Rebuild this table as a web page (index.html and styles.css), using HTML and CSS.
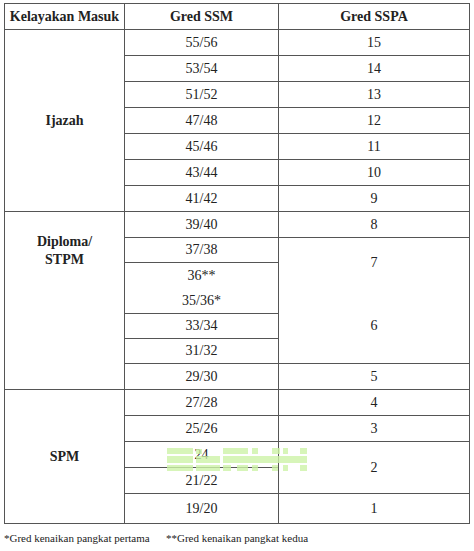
FILE: index.html
```html
<!DOCTYPE html>
<html>
<head>
<meta charset="utf-8">
<link rel="stylesheet" href="styles.css">
</head>
<body>
<div class="page">
  <div class="grid">
    <div class="c h c1" style="grid-row:1">Kelayakan Masuk</div>
    <div class="c h c2" style="grid-row:1">Gred SSM</div>
    <div class="c h c3" style="grid-row:1">Gred SSPA</div>

    <div class="c b c1" style="grid-row:2 / span 7">Ijazah</div>
    <div class="c b c1 top" style="grid-row:9 / span 7">Diploma/<br>STPM</div>
    <div class="c b c1" style="grid-row:16 / span 5">SPM</div>

    <div class="c c2" style="grid-row:2">55/56</div>
    <div class="c c2" style="grid-row:3">53/54</div>
    <div class="c c2" style="grid-row:4">51/52</div>
    <div class="c c2" style="grid-row:5">47/48</div>
    <div class="c c2" style="grid-row:6">45/46</div>
    <div class="c c2" style="grid-row:7">43/44</div>
    <div class="c c2" style="grid-row:8">41/42</div>
    <div class="c c2" style="grid-row:9">39/40</div>
    <div class="c c2" style="grid-row:10">37/38</div>
    <div class="c c2 nob" style="grid-row:11">36**</div>
    <div class="c c2" style="grid-row:12">35/36*</div>
    <div class="c c2" style="grid-row:13">33/34</div>
    <div class="c c2" style="grid-row:14">31/32</div>
    <div class="c c2" style="grid-row:15">29/30</div>
    <div class="c c2" style="grid-row:16">27/28</div>
    <div class="c c2" style="grid-row:17">25/26</div>
    <div class="c c2" style="grid-row:18">24</div>
    <div class="c c2" style="grid-row:19">21/22</div>
    <div class="c c2" style="grid-row:20">19/20</div>

    <div class="c c3" style="grid-row:2">15</div>
    <div class="c c3" style="grid-row:3">14</div>
    <div class="c c3" style="grid-row:4">13</div>
    <div class="c c3" style="grid-row:5">12</div>
    <div class="c c3" style="grid-row:6">11</div>
    <div class="c c3" style="grid-row:7">10</div>
    <div class="c c3" style="grid-row:8">9</div>
    <div class="c c3" style="grid-row:9">8</div>
    <div class="c c3 nob" style="grid-row:10 / span 2">7</div>
    <div class="c c3" style="grid-row:12 / span 3">6</div>
    <div class="c c3" style="grid-row:15">5</div>
    <div class="c c3" style="grid-row:16">4</div>
    <div class="c c3" style="grid-row:17">3</div>
    <div class="c c3" style="grid-row:18 / span 2">2</div>
    <div class="c c3" style="grid-row:20">1</div>
  </div>
  <div class="notes">
    <span class="n1">*Gred kenaikan pangkat pertama</span>
    <span>**Gred kenaikan pangkat kedua</span>
  </div>
</div>
<svg class="wm" width="474" height="551" viewBox="0 0 474 551">
  <g fill="#cdf3a8" fill-opacity="0.8">
    <rect x="167" y="448" width="26" height="6"/>
    <rect x="167" y="456" width="26" height="7"/>
    <rect x="167" y="465" width="26" height="6"/>
    <rect x="196" y="456" width="24" height="7"/>
    <rect x="196" y="465" width="24" height="6"/>
    <rect x="196" y="449" width="6" height="5"/>
    <rect x="223" y="448" width="25" height="6"/>
    <rect x="223" y="456" width="84" height="7"/>
    <rect x="223" y="465" width="8" height="6"/>
    <rect x="237" y="465" width="11" height="6"/>
    <rect x="252" y="448" width="6" height="6"/>
    <rect x="252" y="465" width="6" height="6"/>
    <rect x="272" y="448" width="8" height="6"/>
    <rect x="272" y="465" width="6" height="6"/>
    <rect x="283" y="448" width="5" height="6"/>
    <rect x="283" y="465" width="5" height="6"/>
    <rect x="300" y="448" width="7" height="6"/>
    <rect x="300" y="465" width="7" height="6"/>
  </g>
</svg>
</body>
</html>
```

FILE: styles.css
```css
html, body {
  margin: 0;
  padding: 0;
  background: #ffffff;
}
body {
  font-family: "Liberation Serif", "DejaVu Serif", serif;
  color: #222;
  width: 474px;
  height: 551px;
  overflow: hidden;
  position: relative;
}
.page {
  padding: 3px 0 0 4px;
}
.grid {
  display: grid;
  width: 466px;
  box-sizing: border-box;
  border-top: 1px solid #555;
  border-left: 1px solid #555;
  grid-template-columns: 120px 154px 191px;
  grid-template-rows: 26px repeat(7, 26px) 26px 25px 25px 26px 25px 25px 26px 26px 26px 26px 26px 30px;
}
.c {
  box-sizing: border-box;
  border-right: 1px solid #555;
  border-bottom: 1px solid #555;
  display: flex;
  align-items: center;
  justify-content: center;
  text-align: center;
  font-family: "Liberation Serif", "DejaVu Serif", serif;
  font-size: 14px;
  line-height: 18px;
}
.c1 { grid-column: 1; }
.c2 { grid-column: 2; }
.c3 { grid-column: 3; }
.h, .b {
  font-weight: bold;
}
.top {
  align-items: flex-start;
  padding-top: 21px;
}
.nob {
  border-bottom: none;
}
.notes {
  font-family: "Liberation Serif", "DejaVu Serif", serif;
  font-size: 11px;
  line-height: 14px;
  padding-top: 7px;
  display: flex;
}
.n1 {
  width: 162px;
}
.wm {
  position: absolute;
  left: 0;
  top: 0;
  pointer-events: none;
}
```
